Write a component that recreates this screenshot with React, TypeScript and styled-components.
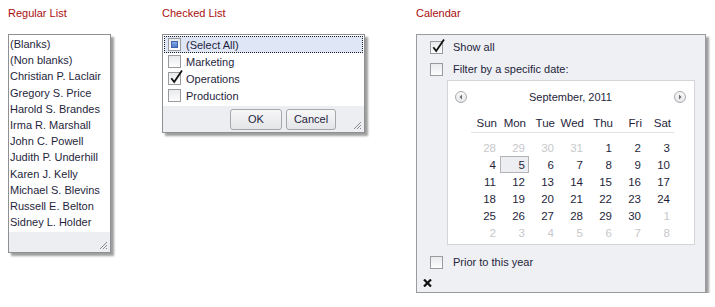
import { createGlobalStyle, styled } from "styled-components";

const GlobalStyle = createGlobalStyle`
  body {
    margin: 0;
    background: #fff;
    font-family: "Liberation Sans", Arial, sans-serif;
    font-size: 11px;
    color: #1f1f3d;
  }
`;

const Page = styled.div`
  display: flex;
  padding: 6px 0 0 8px;
`;

const Column = styled.div<{ $width: number }>`
  width: ${(p) => p.$width}px;
  display: flex;
  flex-direction: column;
  align-items: flex-start;
`;

const Title = styled.div`
  color: #a80e0e;
  line-height: 14px;
  height: 14px;
  margin-bottom: 14px;
`;

const Popup = styled.div<{ $width: number }>`
  width: ${(p) => p.$width}px;
  box-sizing: border-box;
  border: 1px solid #8f9093;
  background: #fff;
  box-shadow: 3px 3px 2px rgba(0, 0, 0, 0.38);
  display: flex;
  flex-direction: column;
`;

const Items = styled.div`
  padding: 1px 0 2px;
`;

const Item = styled.div`
  line-height: 16px;
  height: 16.2px;
  padding-left: 1px;
  white-space: nowrap;
`;

const Footer = styled.div<{ $height: number }>`
  height: ${(p) => p.$height}px;
  background: #eceef1;
  display: flex;
  align-items: center;
  justify-content: flex-end;
  gap: 4px;
  padding-right: 2px;
  position: relative;
`;

const Grip = styled.svg`
  position: absolute;
  right: 2px;
  bottom: 2px;
`;

const CheckRow = styled.div<{ $active?: boolean }>`
  height: 17px;
  display: flex;
  align-items: center;
  gap: 5px;
  padding-left: 3px;
  box-sizing: border-box;
  background: ${(p) => (p.$active ? "#dfe7f7" : "transparent")};
  border: 1px ${(p) => (p.$active ? "dotted #222" : "solid transparent")};
`;

const CheckList = styled.div`
  padding: 1px 1px 2px;
  display: flex;
  flex-direction: column;
`;

const Box = styled.span`
  width: 13px;
  height: 13px;
  box-sizing: border-box;
  border: 1px solid #9a9b9e;
  background: linear-gradient(#e9eaec, #fdfdfd);
  position: relative;
  flex: none;
  display: inline-block;
`;

const Fill = styled.span`
  position: absolute;
  left: 2px;
  top: 2px;
  width: 7px;
  height: 7px;
  box-sizing: border-box;
  border: 1px solid #3f64ad;
  background: linear-gradient(#88a8e6, #5079cb);
`;

const Tick = styled.svg`
  position: absolute;
  left: 0;
  top: -3px;
  overflow: visible;
`;

const Button = styled.button<{ $width: number }>`
  width: ${(p) => p.$width}px;
  height: 21px;
  border: 1px solid #a6a7aa;
  border-radius: 3px;
  background: linear-gradient(#f7f7f8, #e4e5e8);
  font-family: "Liberation Sans", Arial, sans-serif;
  font-size: 11px;
  color: #1f1f3d;
  padding: 0;
`;

const Panel = styled.div`
  width: 290px;
  height: 259px;
  box-sizing: border-box;
  border: 1px solid #9a9b9e;
  background: #eef0f3;
  box-shadow: 3px 3px 2px rgba(0, 0, 0, 0.38);
  display: flex;
  flex-direction: column;
`;

const OptionRow = styled.div<{ $top?: number }>`
  height: 22px;
  display: flex;
  align-items: center;
  gap: 10px;
  padding-left: 13px;
  margin-top: ${(p) => p.$top ?? 0}px;
`;

const Calendar = styled.div`
  margin-left: 30px;
  width: 248px;
  height: 165px;
  box-sizing: border-box;
  border: 1px solid #d3d5d9;
  background: #fff;
  display: flex;
  flex-direction: column;
`;

const CalHeader = styled.div`
  display: flex;
  align-items: center;
  justify-content: space-between;
  padding: 9px 8px 0 7px;
  height: 14px;
`;

const ArrowButton = styled.span`
  width: 12px;
  height: 12px;
  box-sizing: border-box;
  border: 1px solid #a9aaad;
  border-radius: 50%;
  background: linear-gradient(#fafafa, #e6e7ea);
  display: flex;
  align-items: center;
  justify-content: center;
`;

const Grid = styled.div`
  display: grid;
  grid-template-columns: repeat(7, 29px);
  margin: 11px 0 0 23px;
`;

const DayName = styled.div`
  height: 17px;
  line-height: 16px;
  text-align: right;
  padding-right: 3px;
  border-bottom: 1px solid #e1e2e5;
  margin-bottom: 6px;
  font-size: 11.5px;
`;

const Day = styled.div<{ $muted?: boolean; $today?: boolean }>`
  height: 17px;
  line-height: 16px;
  text-align: right;
  padding-right: 3px;
  box-sizing: border-box;
  color: ${(p) => (p.$muted ? "#c6c7ca" : "#1f1f3d")};
  border: 1px solid ${(p) => (p.$today ? "#b2b3b6" : "transparent")};
  background: ${(p) => (p.$today ? "#eceef2" : "transparent")};
  font-size: 11.5px;
`;

const ClearRow = styled.div`
  height: 18px;
  display: flex;
  align-items: center;
  padding-left: 6px;
  margin-top: 1px;
`;

const Spacer = styled.span`
  width: 22px;
`;

type CheckState = "off" | "on" | "mixed";

const Check = ({ state }: { state: CheckState }) => (
  <Box>
    {state === "mixed" && <Fill />}
    {state === "on" && (
      <Tick width="13" height="13" viewBox="0 0 13 13">
        <path d="M2.3 8.2 L5.2 12 L13 0.5" fill="none" stroke="#111" strokeWidth="1.8" />
      </Tick>
    )}
  </Box>
);

const ResizeGrip = () => (
  <Grip width="10" height="10" viewBox="0 0 10 10">
    <path d="M9 2 L2 9 M9 5 L5 9 M9 8 L8 9" stroke="#8a8b8e" strokeWidth="1" />
  </Grip>
);

const Arrow = ({ dir }: { dir: "left" | "right" }) => (
  <ArrowButton>
    <svg width="6" height="6" viewBox="0 0 6 6">
      <path d={dir === "left" ? "M4 0.5 L1.5 3 L4 5.5 Z" : "M2 0.5 L4.5 3 L2 5.5 Z"} fill="#6c6d70" />
    </svg>
  </ArrowButton>
);

const names = [
  "(Blanks)",
  "(Non blanks)",
  "Christian P. Laclair",
  "Gregory S. Price",
  "Harold S. Brandes",
  "Irma R. Marshall",
  "John C. Powell",
  "Judith P. Underhill",
  "Karen J. Kelly",
  "Michael S. Blevins",
  "Russell E. Belton",
  "Sidney L. Holder",
];

const departments: { label: string; state: CheckState }[] = [
  { label: "(Select All)", state: "mixed" },
  { label: "Marketing", state: "off" },
  { label: "Operations", state: "on" },
  { label: "Production", state: "off" },
];

const weekDays = ["Sun", "Mon", "Tue", "Wed", "Thu", "Fri", "Sat"];

const days: { n: number; muted?: boolean }[] = [
  ...[28, 29, 30, 31].map((n) => ({ n, muted: true })),
  ...Array.from({ length: 30 }, (_, i) => ({ n: i + 1 })),
  ...[1, 2, 3, 4, 5, 6, 7, 8].map((n) => ({ n, muted: true })),
];

export default function App() {
  return (
    <>
      <GlobalStyle />
      <Page>
        <Column $width={154}>
          <Title>Regular List</Title>
          <Popup $width={103}>
            <Items>
              {names.map((n) => (
                <Item key={n}>{n}</Item>
              ))}
            </Items>
            <Footer $height={20}>
              <ResizeGrip />
            </Footer>
          </Popup>
        </Column>

        <Column $width={254}>
          <Title>Checked List</Title>
          <Popup $width={203}>
            <CheckList>
              {departments.map((d, i) => (
                <CheckRow key={d.label} $active={i === 0}>
                  <Check state={d.state} />
                  {d.label}
                </CheckRow>
              ))}
            </CheckList>
            <Footer $height={26}>
              <Button $width={52}>OK</Button>
              <Button $width={50}>Cancel</Button>
              <Spacer />
              <ResizeGrip />
            </Footer>
          </Popup>
        </Column>

        <Column $width={295}>
          <Title>Calendar</Title>
          <Panel>
            <OptionRow $top={1}>
              <Check state="on" />
              Show all
            </OptionRow>
            <OptionRow>
              <Check state="off" />
              Filter by a specific date:
            </OptionRow>
            <Calendar>
              <CalHeader>
                <Arrow dir="left" />
                <span>September, 2011</span>
                <Arrow dir="right" />
              </CalHeader>
              <Grid>
                {weekDays.map((w) => (
                  <DayName key={w}>{w}</DayName>
                ))}
                {days.map((d, i) => (
                  <Day key={i} $muted={d.muted} $today={!d.muted && d.n === 5}>
                    {d.n}
                  </Day>
                ))}
              </Grid>
            </Calendar>
            <OptionRow $top={6}>
              <Check state="off" />
              Prior to this year
            </OptionRow>
            <ClearRow>
              <svg width="9" height="8" viewBox="0 0 9 8">
                <path d="M1 0.5 L8 7.5 M8 0.5 L1 7.5" stroke="#111" strokeWidth="2.2" />
              </svg>
            </ClearRow>
          </Panel>
        </Column>
      </Page>
    </>
  );
}
